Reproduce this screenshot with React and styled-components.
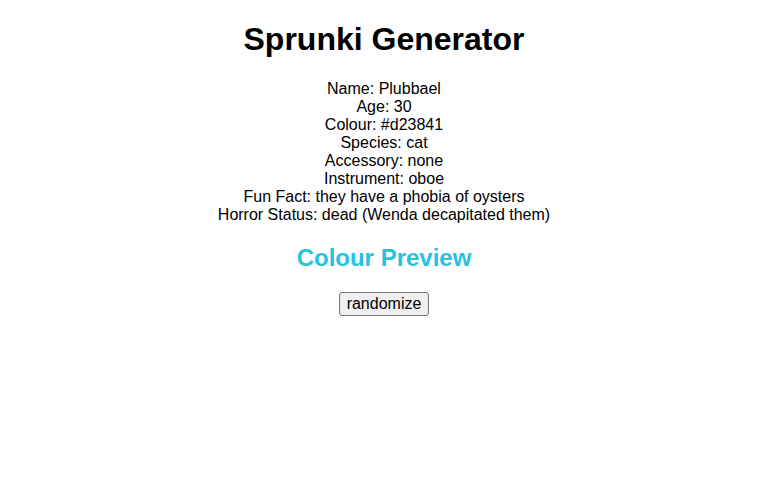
import React, { useState } from "react";
import styled, { createGlobalStyle } from "styled-components";

const GlobalStyle = createGlobalStyle`
  body {
    margin: 0;
    background: #fff;
    font-family: "Liberation Sans", Arial, sans-serif;
    color: #000;
  }
`;

const Page = styled.main`
  text-align: center;
`;

const Title = styled.h1`
  font-size: 32px;
  font-weight: bold;
  margin: 21.44px 0;
  line-height: 37px;
`;

const Details = styled.div`
  font-size: 16px;
  line-height: 18px;
`;

const Line = styled.div``;

const Preview = styled.h2`
  font-size: 24px;
  font-weight: bold;
  line-height: 28px;
  margin: 19.92px 0;
  color: ${({ $tint }) => $tint};
`;

const Button = styled.button`
  box-sizing: border-box;
  height: 24px;
  font-family: "Liberation Sans", Arial, sans-serif;
  font-size: 16px;
  line-height: 18px;
  padding: 2px 7px;
  border: 1px solid #767676;
  border-radius: 3px;
  background: #efefef;
  color: #000;
  cursor: pointer;
`;

const sprunki = {
  name: "Plubbael",
  age: 30,
  colour: "#d23841",
  species: "cat",
  accessory: "none",
  instrument: "oboe",
  funFact: "they have a phobia of oysters",
  horror: "dead (Wenda decapitated them)",
};

export default function App() {
  const [s] = useState(sprunki);

  return (
    <>
      <GlobalStyle />
      <Page>
        <Title>Sprunki Generator</Title>
        <Details>
          <Line>Name: {s.name}</Line>
          <Line>Age: {s.age}</Line>
          <Line>Colour: {s.colour}</Line>
          <Line>Species: {s.species}</Line>
          <Line>Accessory: {s.accessory}</Line>
          <Line>Instrument: {s.instrument}</Line>
          <Line>Fun Fact: {s.funFact}</Line>
          <Line>Horror Status: {s.horror}</Line>
        </Details>
        <Preview $tint="#24c3df">Colour Preview</Preview>
        <Button>randomize</Button>
      </Page>
    </>
  );
}
